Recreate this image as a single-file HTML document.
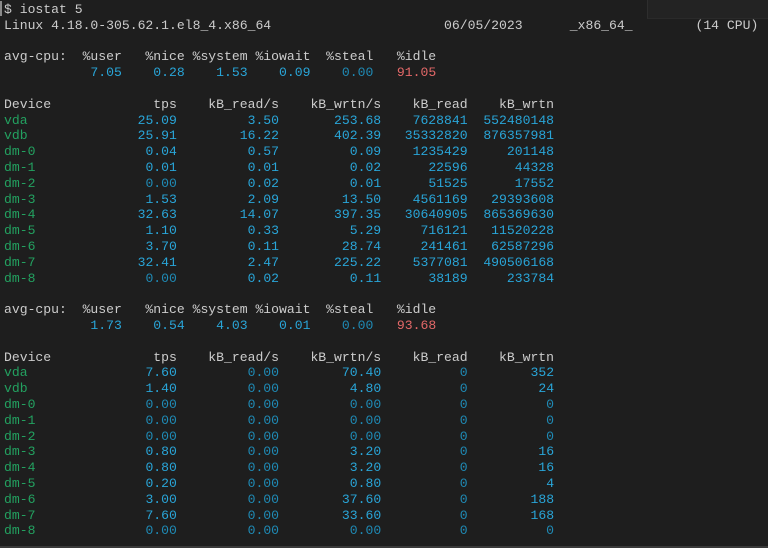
<!DOCTYPE html>
<html><head><meta charset="utf-8"><style>
html,body{margin:0;padding:0;background:#1e1e1e;width:768px;height:548px;overflow:hidden}
.p{position:absolute;left:647px;top:0;width:121px;height:18px;background:#232323;border-left:1px solid #2e2e2e;border-bottom:1px solid #2a2a2a}
.cur{position:absolute;left:0;top:1px;width:2px;height:15px;background:#8a8a8a}
pre{position:absolute;left:4px;top:2px;margin:0;font-family:"Liberation Mono",monospace;font-size:13.1px;line-height:15.79px;color:#cccccc;letter-spacing:0}
.g{color:#23a160}.b{color:#29a5d8}.d{color:#1f8ab5}.r{color:#e36868}
.bot{position:absolute;left:0;bottom:0;width:768px;height:2px;background:#3a3a3a}
</style></head><body>
<div class="p"></div><div class="cur"></div>
<pre>$ iostat 5
Linux 4.18.0-305.62.1.el8_4.x86_64                      06/05/2023      _x86_64_        (14 CPU)

avg-cpu:  %user   %nice %system %iowait  %steal   %idle
<span class="b">           7.05    0.28    1.53    0.09</span>    <span class="d">0.00</span>   <span class="r">91.05</span>

Device             tps    kB_read/s    kB_wrtn/s    kB_read    kB_wrtn
<span class="g">vda</span><span class="b">              25.09         3.50       253.68    7628841  552480148</span>
<span class="g">vdb</span><span class="b">              25.91        16.22       402.39   35332820  876357981</span>
<span class="g">dm-0</span><span class="b">              0.04         0.57         0.09    1235429     201148</span>
<span class="g">dm-1</span><span class="b">              0.01         0.01         0.02      22596      44328</span>
<span class="g">dm-2</span>              <span class="d">0.00</span><span class="b">         0.02         0.01      51525      17552</span>
<span class="g">dm-3</span><span class="b">              1.53         2.09        13.50    4561169   29393608</span>
<span class="g">dm-4</span><span class="b">             32.63        14.07       397.35   30640905  865369630</span>
<span class="g">dm-5</span><span class="b">              1.10         0.33         5.29     716121   11520228</span>
<span class="g">dm-6</span><span class="b">              3.70         0.11        28.74     241461   62587296</span>
<span class="g">dm-7</span><span class="b">             32.41         2.47       225.22    5377081  490506168</span>
<span class="g">dm-8</span>              <span class="d">0.00</span><span class="b">         0.02         0.11      38189     233784</span>

avg-cpu:  %user   %nice %system %iowait  %steal   %idle
<span class="b">           1.73    0.54    4.03    0.01</span>    <span class="d">0.00</span>   <span class="r">93.68</span>

Device             tps    kB_read/s    kB_wrtn/s    kB_read    kB_wrtn
<span class="g">vda</span><span class="b">               7.60</span>         <span class="d">0.00</span><span class="b">        70.40</span>          <span class="d">0</span><span class="b">        352</span>
<span class="g">vdb</span><span class="b">               1.40</span>         <span class="d">0.00</span><span class="b">         4.80</span>          <span class="d">0</span><span class="b">         24</span>
<span class="g">dm-0</span>              <span class="d">0.00         0.00         0.00          0          0</span>
<span class="g">dm-1</span>              <span class="d">0.00         0.00         0.00          0          0</span>
<span class="g">dm-2</span>              <span class="d">0.00         0.00         0.00          0          0</span>
<span class="g">dm-3</span><span class="b">              0.80</span>         <span class="d">0.00</span><span class="b">         3.20</span>          <span class="d">0</span><span class="b">         16</span>
<span class="g">dm-4</span><span class="b">              0.80</span>         <span class="d">0.00</span><span class="b">         3.20</span>          <span class="d">0</span><span class="b">         16</span>
<span class="g">dm-5</span><span class="b">              0.20</span>         <span class="d">0.00</span><span class="b">         0.80</span>          <span class="d">0</span><span class="b">          4</span>
<span class="g">dm-6</span><span class="b">              3.00</span>         <span class="d">0.00</span><span class="b">        37.60</span>          <span class="d">0</span><span class="b">        188</span>
<span class="g">dm-7</span><span class="b">              7.60</span>         <span class="d">0.00</span><span class="b">        33.60</span>          <span class="d">0</span><span class="b">        168</span>
<span class="g">dm-8</span>              <span class="d">0.00         0.00         0.00          0          0</span>
</pre>
<div class="bot"></div>
</body></html>
